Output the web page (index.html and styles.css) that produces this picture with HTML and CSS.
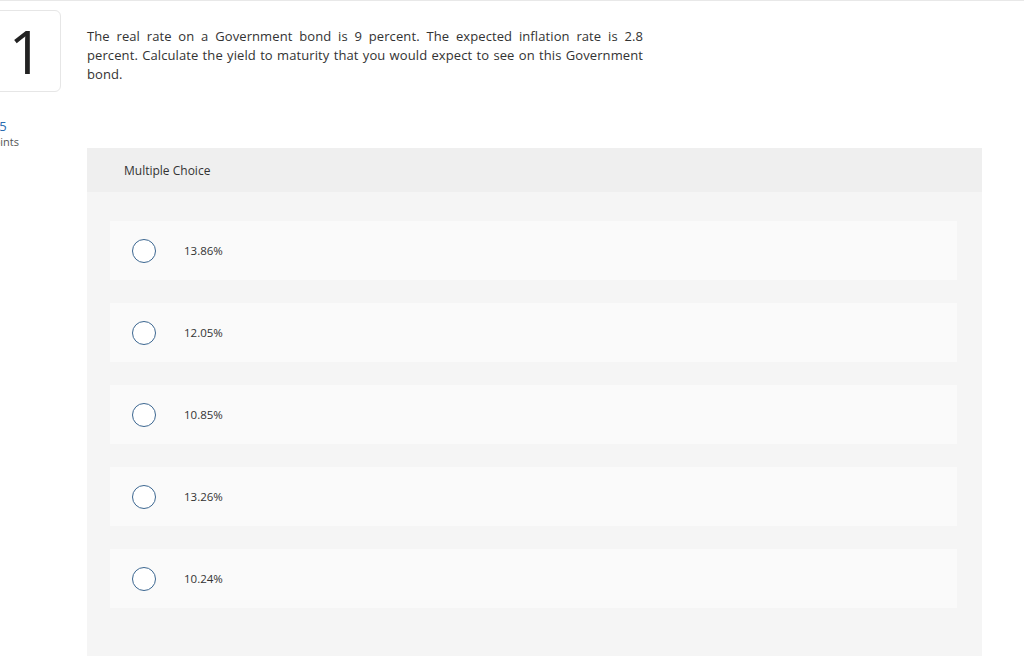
FILE: index.html
```html
<!DOCTYPE html>
<html lang="en">
<head>
<meta charset="utf-8">
<title>Question 1</title>
<link rel="stylesheet" href="styles.css">
</head>
<body>
<div class="page">
  <aside class="side">
    <div class="qnum">1</div>
    <div class="pts">
      <span class="pts-val">5</span>
      <span class="pts-lbl">points</span>
    </div>
  </aside>
  <main class="content">
    <p class="question">The real rate on a Government bond is 9 percent. The expected inflation rate is 2.8 percent. Calculate the yield to maturity that you would expect to see on this Government bond.</p>
    <section class="mc">
      <div class="mc-head">Multiple Choice</div>
      <div class="mc-body">
        <label class="opt"><span class="radio"></span><span class="opt-text">13.86%</span></label>
        <label class="opt"><span class="radio"></span><span class="opt-text">12.05%</span></label>
        <label class="opt"><span class="radio"></span><span class="opt-text">10.85%</span></label>
        <label class="opt"><span class="radio"></span><span class="opt-text">13.26%</span></label>
        <label class="opt"><span class="radio"></span><span class="opt-text">10.24%</span></label>
      </div>
    </section>
  </main>
</div>
</body>
</html>
```

FILE: styles.css
```css
html, body {
  margin: 0;
  padding: 0;
  background: #fff;
  overflow: hidden;
}
body {
  font-family: "Open Sans", "Liberation Sans", sans-serif;
  color: #333;
  border-top: 1px solid #e8e8e8;
}
.page {
  display: flex;
  align-items: flex-start;
  padding-top: 9px;
}
.side {
  width: 72px;
  margin-left: -11px;
  flex: none;
  display: flex;
  flex-direction: column;
}
.qnum {
  height: 82px;
  border: 1px solid #e6e6e6;
  border-radius: 6px;
  display: flex;
  align-items: center;
  justify-content: center;
  font-size: 60px;
  font-weight: 500;
  color: #222;
  padding-left: 2px;
  box-sizing: border-box;
}
.pts {
  width: 28px;
  margin-top: 26px;
  display: flex;
  flex-direction: column;
  align-items: center;
  line-height: 16px;
}
.pts-val {
  color: #2b6cb0;
  font-size: 13px;
}
.pts-lbl {
  color: #555;
  font-size: 11px;
}
.content {
  margin-left: 26px;
  flex: none;
}
.question {
  width: 556px;
  margin: 17px 0 0 0;
  font-size: 13px;
  letter-spacing: 0.1px;
  line-height: 19px;
  text-align: justify;
  color: #333;
}
.mc {
  width: 895px;
  margin-top: 64px;
  background: #f5f5f5;
}
.mc-head {
  height: 44px;
  background: #efefef;
  padding-left: 37px;
  display: flex;
  align-items: center;
  font-size: 12px;
  color: #333;
}
.mc-body {
  padding: 29px 25px 48px 23px;
  display: flex;
  flex-direction: column;
  gap: 23px;
}
.opt {
  height: 59px;
  background: #fafafa;
  display: flex;
  align-items: center;
  padding-left: 22px;
}
.radio {
  width: 24px;
  height: 24px;
  box-sizing: border-box;
  border: 1.4px solid #3b6690;
  border-radius: 50%;
  background: #fff;
  flex: none;
}
.opt-text {
  margin-left: 28px;
  font-size: 11.5px;
  color: #333;
}
```
